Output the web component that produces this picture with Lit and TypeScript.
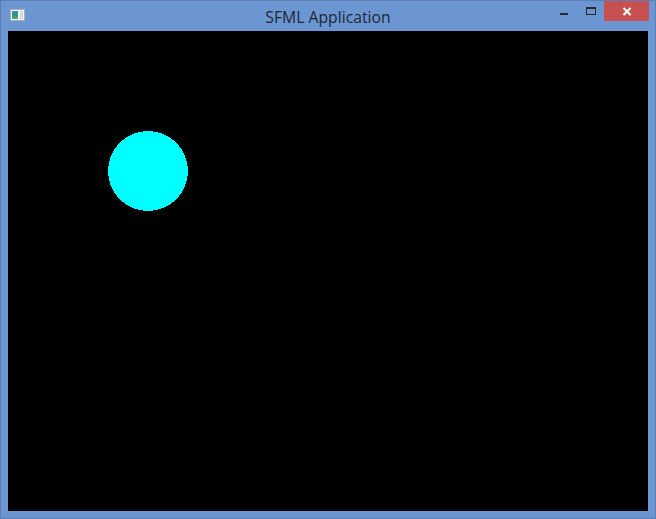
import { LitElement, html, css } from "lit";
import { customElement } from "lit/decorators.js";

@customElement("app-root")
export class AppRoot extends LitElement {
  static styles = css`
    :host {
      display: block;
      width: 656px;
      height: 519px;
    }
    .window {
      box-sizing: border-box;
      width: 656px;
      height: 519px;
      background: #6b96d2;
      border: 1px solid #5a7fb4;
      display: flex;
      flex-direction: column;
    }
    .titlebar {
      height: 29px;
      flex: none;
      display: grid;
      grid-template-columns: 1fr auto 1fr;
      align-items: start;
    }
    .app-icon {
      margin: 8px 0 0 9px;
      display: block;
    }
    .title {
      font-family: "Open Sans", "Noto Sans", sans-serif;
      font-size: 15.75px;
      line-height: 20px;
      margin-top: 6px;
      color: #1f2733;
      white-space: nowrap;
    }
    .controls {
      display: flex;
      justify-content: flex-end;
      align-items: flex-start;
      margin-right: 6px;
    }
    .ctl {
      display: block;
    }
    .close {
      width: 45px;
      height: 20px;
      background: #c75050;
      display: flex;
      align-items: center;
      justify-content: center;
    }
    .content {
      padding: 1px 7px 0;
      display: flex;
    }
    .canvas {
      display: block;
      width: 640px;
      height: 480px;
      background: #000;
    }
  `;

  render() {
    return html`
      <div class="window">
        <div class="titlebar">
          <svg class="app-icon" width="15" height="12" viewBox="0 0 15 12">
            <defs>
              <linearGradient id="pane" x1="0" y1="0" x2="0" y2="1">
                <stop offset="0" stop-color="#4a8fb8" />
                <stop offset="0.5" stop-color="#2f8f7c" />
                <stop offset="1" stop-color="#58b070" />
              </linearGradient>
            </defs>
            <rect x="0.5" y="0.5" width="14" height="11" fill="#eef1f1" stroke="#a9b1b8" />
            <rect x="2" y="2" width="6" height="8" fill="url(#pane)" />
            <rect x="10" y="2" width="3" height="8" fill="#d4d9dc" />
          </svg>
          <div class="title">SFML Application</div>
          <div class="controls">
            <svg class="ctl" width="26" height="20" viewBox="0 0 26 20">
              <rect x="9" y="12" width="8" height="2" fill="#262a30" />
            </svg>
            <svg class="ctl" width="27" height="20" viewBox="0 0 27 20">
              <rect x="9.5" y="6.5" width="9" height="7" fill="none" stroke="#262a30" stroke-width="1" />
              <rect x="9" y="6" width="10" height="2" fill="#262a30" />
            </svg>
            <div class="close">
              <svg width="10" height="9" viewBox="0 0 10 9">
                <path d="M1.5 1 L8.5 8 M8.5 1 L1.5 8" stroke="#fff" stroke-width="2" />
              </svg>
            </div>
          </div>
        </div>
        <div class="content">
          <svg class="canvas" viewBox="0 0 640 480" shape-rendering="crispEdges">
            <circle cx="140" cy="140" r="40" fill="#00ffff" />
          </svg>
        </div>
      </div>
    `;
  }
}
